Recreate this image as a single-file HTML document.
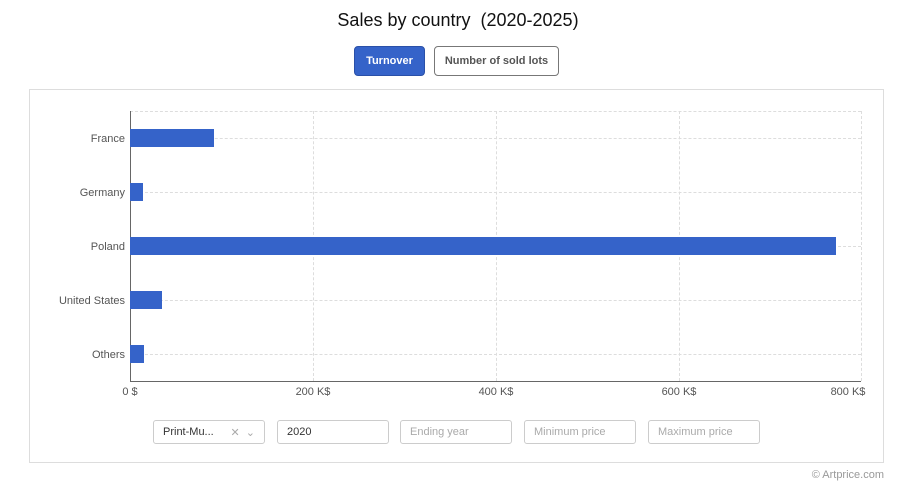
<!DOCTYPE html><html><head><style>
body{margin:0;width:916px;height:492px;background:#fff;font-family:"Liberation Sans",sans-serif;position:relative;overflow:hidden}
.a{position:absolute}
.t{left:0;width:916px;top:10px;text-align:center;font-size:18px;color:#111}
.btn{top:46px;height:30px;box-sizing:border-box;border-radius:4px;font-size:11px;font-weight:bold;display:flex;align-items:center;justify-content:center}
.box{left:29px;top:89px;width:855px;height:374px;box-sizing:border-box;border:1px solid #ddd}
.g{top:111px;height:270px;border-left:1px dashed #ddd}
.h{left:130px;width:731px;border-top:1px dashed #ddd}
.bar{left:130px;height:18px;background:#3563c9}
.lab{right:791px;font-size:11px;color:#555;text-align:right}
.xl{top:386px;font-size:11px;color:#555;transform:translateX(-50%)}
.in{top:420px;height:24px;width:112px;box-sizing:border-box;border:1px solid #ccc;border-radius:3px;font-size:11px;color:#aaa;padding:0 9px;display:flex;align-items:center}
</style></head><body>
<div class="a t">Sales by country &nbsp;(2020-2025)</div>
<div class="a btn" style="left:354px;width:71px;background:#3563c9;color:#fff;border:1px solid #2a50a8">Turnover</div>
<div class="a btn" style="left:434px;width:125px;border:1px solid #777;color:#555">Number of sold lots</div>
<div class="a box"></div>
<div class="a h" style="top:111px"></div>
<div class="a h" style="top:138px"></div><div class="a h" style="top:192px"></div><div class="a h" style="top:246px"></div><div class="a h" style="top:300px"></div><div class="a h" style="top:354px"></div>
<div class="a g" style="left:313px"></div><div class="a g" style="left:496px"></div><div class="a g" style="left:679px"></div><div class="a g" style="left:861px"></div>
<div class="a" style="left:130px;top:111px;height:270px;border-left:1px solid #666"></div>
<div class="a" style="left:130px;top:381px;width:731px;border-top:1px solid #666"></div>
<div class="a bar" style="top:129px;width:84px"></div>
<div class="a bar" style="top:183px;width:13px"></div>
<div class="a bar" style="top:237px;width:706px"></div>
<div class="a bar" style="top:291px;width:32px"></div>
<div class="a bar" style="top:345px;width:14px"></div>
<div class="a lab" style="top:133px">France</div>
<div class="a lab" style="top:187px">Germany</div>
<div class="a lab" style="top:241px">Poland</div>
<div class="a lab" style="top:295px">United States</div>
<div class="a lab" style="top:349px">Others</div>
<div class="a xl" style="left:130px">0 $</div>
<div class="a xl" style="left:313px">200 K$</div>
<div class="a xl" style="left:496px">400 K$</div>
<div class="a xl" style="left:679px">600 K$</div>
<div class="a xl" style="left:848px">800 K$</div>
<div class="a in" style="left:153px;color:#333;justify-content:space-between">Print-Mu... <span style="color:#aaa">✕ &nbsp;⌄</span></div>
<div class="a in" style="left:277px;color:#333">2020</div>
<div class="a in" style="left:400px">Ending year</div>
<div class="a in" style="left:524px">Minimum price</div>
<div class="a in" style="left:648px">Maximum price</div>
<div class="a" style="right:32px;top:469px;font-size:11px;color:#999">© Artprice.com</div>
</body></html>
